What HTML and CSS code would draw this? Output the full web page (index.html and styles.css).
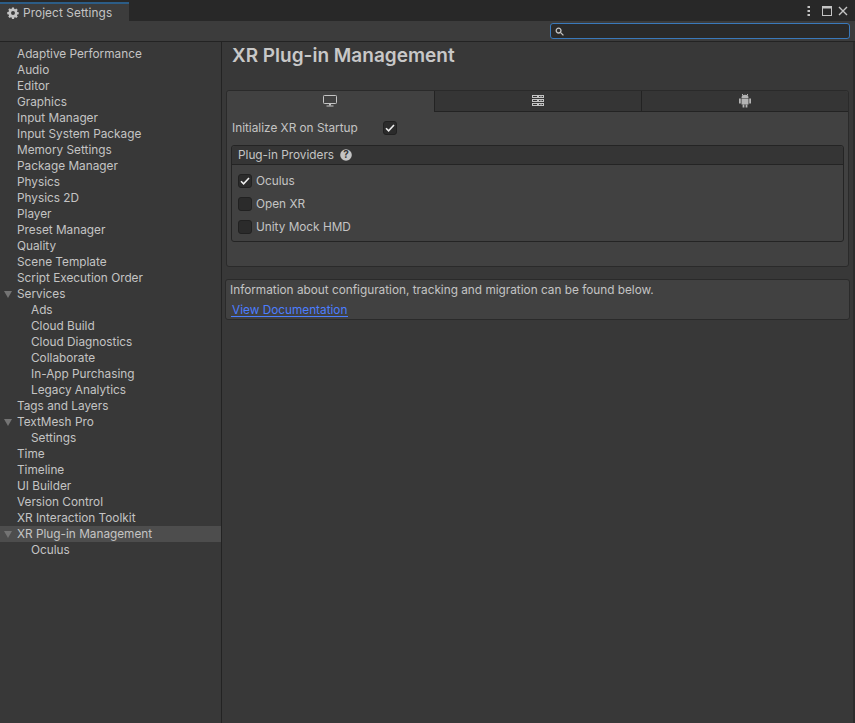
FILE: index.html
```html
<!DOCTYPE html>
<html lang="en">
<head>
<meta charset="utf-8">
<title>Project Settings</title>
<link rel="stylesheet" href="styles.css">
</head>
<body>
<div class="window">
  <header class="tabbar">
    <div class="tab">
      <svg class="gear" viewBox="0 0 14 14" width="12" height="12"><path fill="#c4c4c4" fill-rule="evenodd" d="M5.8 0.6h2.4l.3 1.7 1 .4 1.4-1 1.7 1.7-1 1.4.4 1 1.7.3v2.4l-1.7.3-.4 1 1 1.4-1.7 1.7-1.4-1-1 .4-.3 1.7H5.8l-.3-1.7-1-.4-1.4 1-1.7-1.7 1-1.4-.4-1-1.7-.3V5.8l1.7-.3.4-1-1-1.4 1.7-1.7 1.4 1 1-.4zM7 4.7a2.3 2.3 0 1 0 0 4.6 2.3 2.3 0 0 0 0-4.6z"/></svg>
      <span>Project Settings</span>
    </div>
    <div class="win-actions">
      <svg class="act-more" viewBox="0 0 4 12" width="4" height="12"><g fill="#c4c4c4"><rect x="0.5" y="1" width="2.5" height="2"/><rect x="0.5" y="5" width="2.5" height="2"/><rect x="0.5" y="9" width="2.5" height="2"/></g></svg>
      <svg class="act-max" viewBox="0 0 10 10" width="10" height="10"><rect x="0.5" y="0.5" width="9" height="9" fill="none" stroke="#c4c4c4"/><rect x="0" y="0" width="10" height="2.5" fill="#c4c4c4"/></svg>
      <svg viewBox="0 0 10 10" width="10" height="10"><path d="M1 1l8 8M9 1l-8 8" stroke="#c4c4c4" stroke-width="1.4" fill="none"/></svg>
    </div>
  </header>
  <div class="toolbar">
    <div class="search">
      <svg viewBox="0 0 9 9" width="9" height="9"><circle cx="3.6" cy="3.6" r="2.4" fill="none" stroke="#c4c4c4" stroke-width="1.3"/><path d="M5.4 5.4L8.4 8.4" stroke="#c4c4c4" stroke-width="1.3"/></svg>
    </div>
  </div>
  <div class="main">
    <nav class="sidebar">
      <div class="item">Adaptive Performance</div>
      <div class="item">Audio</div>
      <div class="item">Editor</div>
      <div class="item">Graphics</div>
      <div class="item">Input Manager</div>
      <div class="item">Input System Package</div>
      <div class="item">Memory Settings</div>
      <div class="item">Package Manager</div>
      <div class="item">Physics</div>
      <div class="item">Physics 2D</div>
      <div class="item">Player</div>
      <div class="item">Preset Manager</div>
      <div class="item">Quality</div>
      <div class="item">Scene Template</div>
      <div class="item">Script Execution Order</div>
      <div class="item open">Services</div>
      <div class="item sub">Ads</div>
      <div class="item sub">Cloud Build</div>
      <div class="item sub">Cloud Diagnostics</div>
      <div class="item sub">Collaborate</div>
      <div class="item sub">In-App Purchasing</div>
      <div class="item sub">Legacy Analytics</div>
      <div class="item">Tags and Layers</div>
      <div class="item open">TextMesh Pro</div>
      <div class="item sub">Settings</div>
      <div class="item">Time</div>
      <div class="item">Timeline</div>
      <div class="item">UI Builder</div>
      <div class="item">Version Control</div>
      <div class="item">XR Interaction Toolkit</div>
      <div class="item open selected">XR Plug-in Management</div>
      <div class="item sub">Oculus</div>
    </nav>
    <main class="content">
      <h1 class="title">XR Plug-in Management</h1>
      <section class="tabview">
        <div class="platforms">
          <div class="platform active">
            <svg viewBox="0 0 14 12" width="14" height="12"><rect x="0.5" y="0.5" width="13" height="8" rx="0.8" fill="none" stroke="#c4c4c4"/><rect x="6" y="9" width="2" height="1.5" fill="#c4c4c4"/><rect x="3.5" y="10.5" width="7" height="1" fill="#c4c4c4"/></svg>
          </div>
          <div class="platform">
            <svg viewBox="0 0 12 11" width="12" height="11"><g fill="#c4c4c4"><rect y="0" width="12" height="3"/><rect y="4" width="12" height="3"/><rect y="8" width="12" height="3"/></g><g fill="#333"><rect x="1" y="1" width="4" height="1"/><rect x="7" y="1" width="1.5" height="1"/><rect x="9.5" y="1" width="1.5" height="1"/><rect x="1" y="5" width="4" height="1"/><rect x="7" y="5" width="1.5" height="1"/><rect x="9.5" y="5" width="1.5" height="1"/><rect x="1" y="9" width="4" height="1"/><rect x="7" y="9" width="1.5" height="1"/><rect x="9.5" y="9" width="1.5" height="1"/></g></svg>
          </div>
          <div class="platform">
            <svg viewBox="0 0 12 14" width="12" height="14"><g fill="#b4b4b4"><path d="M2.5 4a3.5 3.2 0 0 1 7 0z"/><rect x="2.5" y="4.5" width="7" height="6"/><rect x="0" y="4.5" width="1.8" height="5"/><rect x="10.2" y="4.5" width="1.8" height="5"/><rect x="3.6" y="10.5" width="1.8" height="3"/><rect x="6.6" y="10.5" width="1.8" height="3"/><rect x="3" y="0" width="1" height="1.5"/><rect x="8" y="0" width="1" height="1.5"/></g></svg>
          </div>
        </div>
        <div class="tabbody">
          <div class="field">
            <span class="field-label">Initialize XR on Startup</span>
            <span class="check checked"><svg viewBox="0 0 10 8" width="10" height="8"><path d="M1 4.2L3.6 6.8L9 1" fill="none" stroke="#eee" stroke-width="1.6"/></svg></span>
          </div>
          <div class="providers">
            <div class="providers-head">
              <span>Plug-in Providers</span>
              <svg viewBox="0 0 12 12" width="12" height="12"><circle cx="6" cy="6" r="5.8" fill="#c4c4c4"/><text x="6" y="9.4" text-anchor="middle" class="help-mark">?</text></svg>
            </div>
            <div class="providers-list">
              <div class="provider"><span class="check checked"><svg viewBox="0 0 10 8" width="10" height="8"><path d="M1 4.2L3.6 6.8L9 1" fill="none" stroke="#eee" stroke-width="1.6"/></svg></span><span>Oculus</span></div>
              <div class="provider"><span class="check"></span><span>Open XR</span></div>
              <div class="provider"><span class="check"></span><span>Unity Mock HMD</span></div>
            </div>
          </div>
        </div>
      </section>
      <section class="info">
        <p class="info-text">Information about configuration, tracking and migration can be found below.</p>
        <a class="doc-link" href="#">View Documentation</a>
      </section>
    </main>
    <div class="edge"></div>
  </div>
</div>
</body>
</html>
```
FILE: styles.css
```css
* { box-sizing: border-box; }
html, body { margin: 0; padding: 0; }
body { background: #383838; font-family: Inter, "Liberation Sans", sans-serif; font-size: 11.8px; color: #c4c4c4; overflow: hidden; }
.window { width: 855px; height: 723px; display: flex; flex-direction: column; }

.tabbar { height: 21px; flex: none; background: #282828; display: flex; justify-content: space-between; }
.tab { width: 129px; height: 19px; background: #3c3c3c; border-top: 2px solid #2c5d87; margin-top: 2px; display: flex; align-items: center; gap: 4px; padding-left: 7px; letter-spacing: 0.1px; }
.win-actions { display: flex; align-items: center; padding-right: 7px; }
.act-more { margin-right: 11px; }
.act-max { margin-right: 6px; }

.toolbar { height: 21px; flex: none; background: #3c3c3c; border-bottom: 1px solid #232323; display: flex; justify-content: flex-end; align-items: flex-start; padding: 2px 5px 0 0; }
.search { width: 300px; height: 16px; background: #2a2a2a; border: 1px solid #3a79bb; border-radius: 3px; display: flex; align-items: center; padding-left: 4px; }

.main { flex: 1; display: flex; min-height: 0; }
.sidebar { width: 222px; flex: none; border-right: 1px solid #232323; padding-top: 4px; }
.item { height: 16px; line-height: 16px; padding-left: 17px; white-space: nowrap; position: relative; }
.item.sub { padding-left: 31px; }
.item.selected { background: #4d4d4d; }
.item.open::before { content: ""; position: absolute; left: 4px; top: 5px; border-left: 4.5px solid transparent; border-right: 4.5px solid transparent; border-top: 7px solid #747474; }

.content { flex: 1; min-width: 0; display: flex; flex-direction: column; padding: 0 3px 0 3px; }
.title { margin: 0; height: 44px; padding: 2px 0 0 7px; font-size: 19px; line-height: 24px; font-weight: 600; color: #c8c8c8; }

.tabview { margin: 4px 1px 0 1px; height: 177px; flex: none; background: #414141; border: 1px solid #2a2a2a; border-radius: 3px; display: flex; flex-direction: column; }
.platforms { height: 21px; flex: none; display: flex; }
.platform { flex: 1; display: flex; align-items: center; justify-content: center; background: #353535; border-bottom: 1px solid #232323; border-left: 1px solid #232323; padding: 0 1px 1px 0; }
.platform.active { background: #414141; border-bottom: 0; border-left: 0; border-right: 1px solid #232323; flex: none; width: 208px; }
.platform:first-child + .platform { border-left: 0; flex: none; width: 206px; }
.platforms .platform:first-child { border-top-left-radius: 3px; }
.platforms .platform:last-child { border-top-right-radius: 3px; padding-right: 0; }

.tabbody { flex: 1; padding: 0 4px; }
.field { height: 33px; display: flex; align-items: center; padding: 0 1px 1px; }
.field-label { width: 151px; }
.check { width: 14px; height: 14px; flex: none; background: #2b2b2b; border: 1px solid #212121; border-radius: 3px; display: inline-flex; align-items: center; justify-content: center; }

.providers { border: 1px solid #242424; border-radius: 3px; height: 97px; }
.providers-head { height: 19px; background: #353535; border-bottom: 1px solid #242424; display: flex; align-items: center; gap: 6px; padding-left: 6px; border-radius: 3px 3px 0 0; }
.help-mark { font-size: 10px; font-weight: 700; fill: #353535; font-family: Inter, "Liberation Sans", sans-serif; }
.providers-list { padding: 5px 6px 0; display: flex; flex-direction: column; }
.provider { height: 23px; display: flex; align-items: center; gap: 4px; padding-bottom: 1px; }

.info { margin-top: 12px; height: 41px; flex: none; background: #414141; border: 1px solid #2a2a2a; border-radius: 3px; padding: 1px 4px 0; }
.info-text { margin: 0; height: 19px; line-height: 19px; }
.doc-link { display: inline-block; margin: 4px 0 0 1px; padding: 0 1px; line-height: 12px; color: #4c7eff; text-decoration: none; border-bottom: 1px solid #4c7eff; }

.edge { width: 2px; flex: none; background: #2c2c2c; }
```
